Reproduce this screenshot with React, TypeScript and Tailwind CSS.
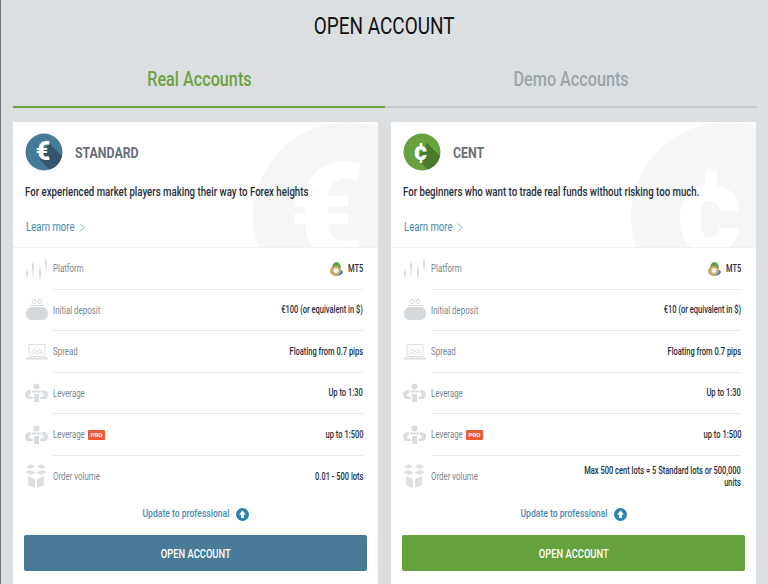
const font = { fontFamily: "Roboto, sans-serif" };

function Candles() {
  return (
    <svg width="24" height="20" viewBox="0 0 24 20" fill="none" stroke="#d9dcdf" strokeWidth="1">
      <path d="M2 11v8M8 3v14M15 8v12M21 0v11" />
      <path d="M2 13v4M8 5v6M15 11v6M21 2v5" strokeWidth="2" />
    </svg>
  );
}

function Purse() {
  return (
    <svg width="24" height="24" viewBox="0 0 24 24">
      <circle cx="9" cy="3.500" r="2" fill="none" stroke="#d3d7da" />
      <circle cx="15" cy="3.500" r="2" fill="none" stroke="#d3d7da" />
      <path d="M5 7.500h14" stroke="#d3d7da" />
      <path d="M6 9h12c3 0 5 4 5 7 0 4-3 6-6 6H7c-3 0-6-2-6-6 0-3 2-7 5-7z" fill="#d5d9dc" />
    </svg>
  );
}

function Laptop() {
  return (
    <svg width="24" height="18" viewBox="0 0 24 18" fill="none" stroke="#dcdfe2">
      <path d="M4 1.500h16v12H4z" />
      <path d="M6 10l3-4 3 3 3-3 3 4M6 12l3-3 3 2 3-2 3 3" />
      <path d="M1 15.500h22" strokeWidth="2" />
    </svg>
  );
}

function Muscle() {
  return (
    <svg width="23" height="20" viewBox="0 0 23 20" fill="#dadde0">
      <circle cx="11.500" cy="3.500" r="3" />
      <path d="M7 7.500h9v2H7z" />
      <path d="M0 10c1-2 3-3 6-3v3c-1 0-2 1-2 3l4 1v2H3c-2 0-3-2-3-6z" />
      <path d="M23 10c-1-2-3-3-6-3v3c1 0 2 1 2 3l-4 1v2h5c2 0 3-2 3-6z" />
      <path d="M9 11h5v8H9z" />
    </svg>
  );
}

function Box() {
  return (
    <svg width="22" height="24" viewBox="0 0 22 24" fill="#dde0e2">
      <path d="M6 0l4 2.500L5 5 1 3zM16 0l-4 2.500L17 5l4-2z" />
      <path d="M0 8l5-2 6 2.500L6 11zM22 8l-5-2-6 2.500L16 11z" />
      <path d="M3 12l7 3v9l-7-3zM19 12l-7 3v9l7-3z" />
    </svg>
  );
}

function Mt5() {
  return (
    <svg width="13" height="14" viewBox="0 0 13 14">
      <path d="M2 6c0-3 2-6 4.500-6S11 3 11 6z" fill="#5f9f56" />
      <path d="M0 9c0-3 3-5 6-5 3 0 5 2 5 5s-2 5-5 5-6-2-6-5z" fill="#c9a96b" />
      <path d="M7 13.800c3 0 5.500-1.500 6-4l-2-2c0 3-2 5-4 6z" fill="#3f7fb5" />
      <circle cx="6" cy="8.500" r="2.500" fill="#f3f3ef" />
    </svg>
  );
}

function CoinIcon({ bg, shade, glyph }: { bg: string; shade: string; glyph: string }) {
  return (
    <svg width="38" height="38" viewBox="0 0 38 38">
      <clipPath id={`coin-${glyph}`}>
        <circle cx="19" cy="19" r="18.500" />
      </clipPath>
      <circle cx="19" cy="19" r="18.500" fill={bg} />
      <path d="M24 10L38 24V38H26L14 26z" fill={shade} clipPath={`url(#coin-${glyph})`} />
      <text x="18" y="27" textAnchor="middle" fontFamily="Roboto, sans-serif" fontWeight="900" fontSize="25" fill="#fff">
        {glyph}
      </text>
    </svg>
  );
}

function Row({ icon, label, value, pro, mt5, last }: { icon: React.ReactNode; label: string; value: React.ReactNode; pro?: boolean; mt5?: boolean; last?: boolean }) {
  return (
    <div className="flex h-[41.500px] items-stretch">
      <div className="flex w-[28px] shrink-0 items-center">{icon}</div>
      <div className={`flex flex-1 items-center justify-between pt-[1px] ${last ? "" : "border-b border-[#e8ebee]"}`}>
        <div className="flex items-center">
          <span className="inline-block w-[58px] origin-left scale-x-[.79] whitespace-nowrap text-[10px] text-[#7d868e]">{label}</span>
          {pro && (
            <span className="-ml-[23px] flex h-[10px] w-[17px] items-center justify-center rounded-[1px] bg-[#ee5a32] text-[6px] font-bold text-white">
              PRO
            </span>
          )}
        </div>
        <div className="flex items-center">
          {mt5 && <Mt5 />}
          <span className="block origin-right scale-x-[.75] whitespace-nowrap text-right text-[10px] font-medium leading-[12px] text-[#262d3a]">{value}</span>
        </div>
      </div>
    </div>
  );
}

function Card({ name, glyph, bg, shade, button, desc, deposit, volume, glyphClass }: { name: string; glyph: string; bg: string; shade: string; button: string; desc: string; deposit: string; volume: React.ReactNode; glyphClass: string }) {
  return (
    <div className="flex h-[462px] w-[365px] flex-col bg-white">
      <div className="relative h-[126px] shrink-0 overflow-hidden border-b border-[#eef0f2] px-[12px] pt-[11px]">
        <div className="absolute left-[240px] top-0 h-[190px] w-[190px] rounded-full bg-[#f6f6f7]" />
        <span className={`absolute font-black text-white ${glyphClass}`}>{glyph}</span>
        <div className="relative flex items-center">
          <CoinIcon bg={bg} shade={shade} glyph={glyph} />
          <span className="ml-[12px] inline-block origin-left translate-y-[1px] scale-x-[.88] text-[14px] font-bold text-[#666f7b]">{name}</span>
        </div>
        <p className="relative mt-[13px] origin-left scale-x-[.805] whitespace-nowrap text-[12px] font-medium leading-[16px] text-[#262d3a]">{desc}</p>
        <div className="relative ml-[1px] mt-[19px] flex items-center text-[#4b8bb0]">
          <span className="inline-block w-[50px] origin-left scale-x-[.8] whitespace-nowrap text-[12px] leading-[16px]">Learn more</span>
          <svg width="6" height="9" viewBox="0 0 6 9" fill="none" stroke="#7fa9c4" className="ml-[3px]">
            <path d="M1 .5l4 4-4 4" />
          </svg>
        </div>
      </div>
      <div className="pl-[12px] pr-[15px]">
        <Row icon={<Candles />} label="Platform" value="MT5" mt5 />
        <Row icon={<Purse />} label="Initial deposit" value={deposit} />
        <Row icon={<Laptop />} label="Spread" value="Floating from 0.7 pips" />
        <Row icon={<Muscle />} label="Leverage" value="Up to 1:30" />
        <Row icon={<Muscle />} label="Leverage" value="up to 1:500" pro />
        <Row icon={<Box />} label="Order volume" value={volume} last />
      </div>
      <div className="mt-[9px] flex items-center justify-center pr-[24px]">
        <span className="inline-block origin-right scale-x-[.78] whitespace-nowrap text-[11px] font-medium text-[#4b8bb0]">Update to professional</span>
        <svg width="13" height="13" viewBox="0 0 13 13" className="ml-[6px]">
          <circle cx="6.500" cy="6.500" r="6.500" fill="#2f7fb0" />
          <path d="M6.500 2.500L10 6.500H8V10H5V6.500H3z" fill="#fff" />
        </svg>
      </div>
      <div className="mx-[11px] mt-[12px] flex h-[36px] items-center justify-center rounded-[2px] pt-[2px] text-white" style={{ background: button }}>
        <span className="inline-block scale-x-[.78] text-[12px] font-medium">OPEN ACCOUNT</span>
      </div>
    </div>
  );
}

export default function App() {
  return (
    <div className="h-[584px] w-[768px] overflow-hidden border-l border-[#6f737a] bg-[#dcdfe2]" style={font}>
      <div className="flex h-[52px] items-center justify-center">
        <h1 className="scale-x-[.79] text-[24px] leading-[28px] text-[#111]">OPEN ACCOUNT</h1>
      </div>
      <div className="ml-[12px] flex w-[744px]">
        <div className="flex h-[56px] w-[372px] items-center justify-center border-b-2 border-[#6ea343]">
          <span className="scale-x-[.81] text-[20px] font-medium text-[#6ea343]">Real Accounts</span>
        </div>
        <div className="flex h-[56px] w-[372px] items-center justify-center border-b-2 border-[#c5cacc]">
          <span className="scale-x-[.81] text-[20px] font-medium text-[#9aa5ac]">Demo Accounts</span>
        </div>
      </div>
      <div className="ml-[12px] mt-[14px] flex gap-[13px]">
        <Card
          name="STANDARD"
          glyph="€"
          glyphClass="left-[276px] top-[54px] text-[132px] leading-[72px]"
          bg="#457a99"
          shade="#33556f"
          button="#477b98"
          desc="For experienced market players making their way to Forex heights"
          deposit="€100 (or equivalent in $)"
          volume="0.01 - 500 lots"
        />
        <Card
          name="CENT"
          glyph="¢"
          glyphClass="left-[283px] top-[58px] text-[124px] leading-[60px]"
          bg="#66a23e"
          shade="#487a2b"
          button="#65a13d"
          desc="For beginners who want to trade real funds without risking too much."
          deposit="€10 (or equivalent in $)"
          volume={<>Max 500 cent lots = 5 Standard lots or 500,000<br />units</>}
        />
      </div>
    </div>
  );
}
